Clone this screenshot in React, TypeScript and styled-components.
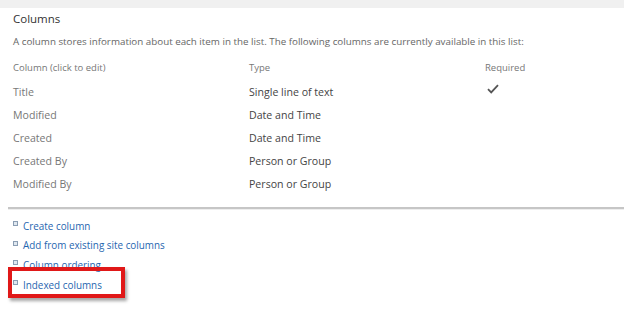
import React, { FC } from "react";
import styled, { createGlobalStyle } from "styled-components";

const GlobalStyle = createGlobalStyle`
    html, body {
        margin: 0;
        padding: 0;
        background: #ffffff;
    }
    body {
        font-family: "Open Sans", "Noto Sans", "Liberation Sans", sans-serif;
        width: 624px;
        height: 316px;
        overflow: hidden;
    }
`;

interface ColumnRow {
    name: string;
    type: string;
    required?: boolean;
}

const rows: ColumnRow[] = [
    { name: "Title", type: "Single line of text", required: true },
    { name: "Modified", type: "Date and Time" },
    { name: "Created", type: "Date and Time" },
    { name: "Created By", type: "Person or Group" },
    { name: "Modified By", type: "Person or Group" },
];

const links = [
    "Create column",
    "Add from existing site columns",
    "Column ordering",
    "Indexed columns",
];

const CheckMark: FC = () => (
    <svg width="12" height="10" viewBox="0 0 12 10">
        <path d="M1 5.2 L4.2 8.4 L11 1.2" fill="none" stroke="#555" strokeWidth="1.8" />
    </svg>
);

const App: FC = () => {
    return (
        <>
            <GlobalStyle />
            <Page>
                <TopBand />
                <Section>
                    <Heading>Columns</Heading>
                    <Description>
                        A column stores information about each item in the list. The following columns are currently available in this list:
                    </Description>
                    <Table>
                        <HeaderCell>Column (click to edit)</HeaderCell>
                        <HeaderCell>Type</HeaderCell>
                        <HeaderCell>Required</HeaderCell>
                        {rows.map((row) => (
                            <React.Fragment key={row.name}>
                                <Cell>{row.name}</Cell>
                                <Cell dark>{row.type}</Cell>
                                <Cell>{row.required && <CheckMark />}</Cell>
                            </React.Fragment>
                        ))}
                    </Table>
                </Section>
                <Divider />
                <LinkList>
                    {links.map((label) => (
                        <LinkItem key={label}>
                            <Bullet />
                            <LinkText href="#">{label}</LinkText>
                        </LinkItem>
                    ))}
                    <Highlight />
                </LinkList>
            </Page>
        </>
    );
};

export default App;

const Page = styled.div`
    width: 624px;
    height: 316px;
    background: #ffffff;
    display: flex;
    flex-direction: column;
`;

const TopBand = styled.div`
    height: 8px;
    background: #f0f0f0;
    flex-shrink: 0;
`;

const Section = styled.div`
    padding-left: 13px;
    display: flex;
    flex-direction: column;
`;

const Heading = styled.div`
    margin-top: 2px;
    height: 18px;
    line-height: 18px;
    font-size: 11.5px;
    color: #333;
`;

const Description = styled.div`
    margin-top: 6px;
    height: 16px;
    line-height: 16px;
    font-size: 9.8px;
    color: #666;
    white-space: nowrap;
`;

const Table = styled.div`
    margin-top: 7px;
    display: grid;
    grid-template-columns: 236px 236px auto;
    grid-auto-rows: 23px;
`;

const HeaderCell = styled.div`
    height: 21px;
    line-height: 21px;
    font-size: 9.5px;
    color: #777;
    white-space: nowrap;
`;

const Cell = styled.div<{ dark?: boolean }>`
    display: flex;
    align-items: center;
    font-size: 10.6px;
    color: ${(p) => (p.dark ? "#444" : "#777")};
    white-space: nowrap;
    svg {
        margin-left: 2px;
        margin-top: -6px;
    }
`;

const Divider = styled.div`
    margin: 12px 0 0 8px;
    height: 2px;
    background: #c6c6c6;
    border-bottom: 1px solid #eee;
`;

const LinkList = styled.div`
    position: relative;
    margin-top: 6px;
    padding-left: 13px;
    display: flex;
    flex-direction: column;
`;

const LinkItem = styled.div`
    height: 19.6px;
    display: flex;
    align-items: center;
`;

const Bullet = styled.span`
    width: 3px;
    height: 3px;
    border: 1px solid #8a9db3;
    background: #dfe7ef;
    margin-right: 5px;
    margin-top: -4px;
`;

const LinkText = styled.a`
    font-size: 9.9px;
    color: #1f66b0;
    text-decoration: none;
    white-space: nowrap;
`;

const Highlight = styled.div`
    position: absolute;
    left: 8px;
    top: 51px;
    width: 109px;
    height: 23px;
    border: 4px solid #e01818;
    box-shadow: 2px 3px 3px rgba(0, 0, 0, 0.35);
    pointer-events: none;
`;
